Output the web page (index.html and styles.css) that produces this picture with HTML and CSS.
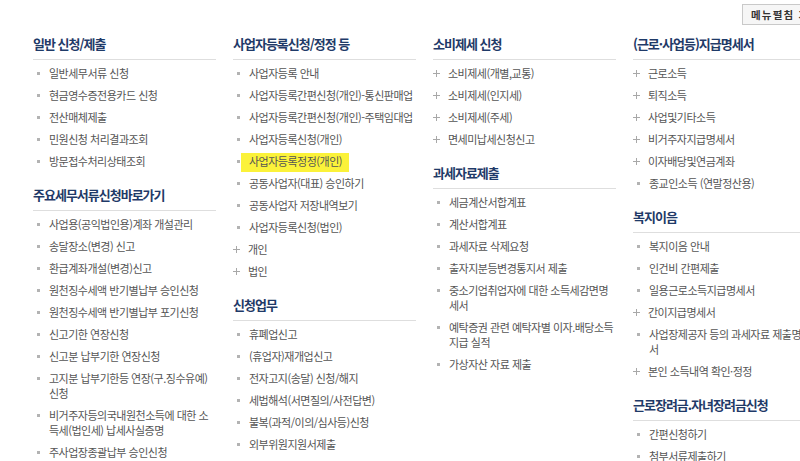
FILE: index.html
```html
<!DOCTYPE html>
<html lang="ko">
<head>
  <meta charset="UTF-8">
  <meta name="viewport" content="width=device-width, initial-scale=1.0">
  <link rel="stylesheet" href="styles.css">
</head>
<body>

<div class="topbar">
  <button class="menu-btn">메뉴펼침 가이드</button>
</div>

<div class="menu">
  <div class="col">
    <div class="group">
      <h2>일반 신청/제출</h2>
      <ul>
        <li>일반세무서류 신청</li>
        <li>현금영수증전용카드 신청</li>
        <li>전산매체제출</li>
        <li>민원신청 처리결과조회</li>
        <li>방문접수처리상태조회</li>
      </ul>
    </div>
    <div class="group">
      <h2>주요세무서류신청바로가기</h2>
      <ul>
        <li>사업용(공익법인용)계좌 개설관리</li>
        <li>송달장소(변경) 신고</li>
        <li>환급계좌개설(변경)신고</li>
        <li>원천징수세액 반기별납부 승인신청</li>
        <li>원천징수세액 반기별납부 포기신청</li>
        <li>신고기한 연장신청</li>
        <li>신고분 납부기한 연장신청</li>
        <li>고지분 납부기한등 연장(구.징수유예)신청</li>
        <li>비거주자등의국내원천소득에 대한 소득세(법인세) 납세사실증명</li>
        <li>주사업장종괄납부 승인신청</li>
      </ul>
    </div>
  </div>

  <div class="col">
    <div class="group">
      <h2>사업자등록신청/정정 등</h2>
      <ul>
        <li>사업자등록 안내</li>
        <li>사업자등록간편신청(개인)-통신판매업</li>
        <li>사업자등록간편신청(개인)-주택임대업</li>
        <li>사업자등록신청(개인)</li>
        <li><span class="mark">사업자등록정정(개인)</span></li>
        <li>공동사업자(대표) 승인하기</li>
        <li>공동사업자 저장내역보기</li>
        <li>사업자등록신청(법인)</li>
        <li class="plus">개인</li>
        <li class="plus">법인</li>
      </ul>
    </div>
    <div class="group">
      <h2>신청업무</h2>
      <ul>
        <li>휴폐업신고</li>
        <li>(휴업자)재개업신고</li>
        <li>전자고지(송달) 신청/해지</li>
        <li>세법해석(서면질의/사전답변)</li>
        <li>불복(과적/이의/심사등)신청</li>
        <li>외부위원지원서제출</li>
      </ul>
    </div>
  </div>

  <div class="col">
    <div class="group">
      <h2>소비제세 신청</h2>
      <ul>
        <li class="plus">소비제세(개별,교통)</li>
        <li class="plus">소비제세(인지세)</li>
        <li class="plus">소비제세(주세)</li>
        <li class="plus">면세미납세신청신고</li>
      </ul>
    </div>
    <div class="group">
      <h2>과세자료제출</h2>
      <ul>
        <li>세금계산서합계표</li>
        <li>계산서합계표</li>
        <li>과세자료 삭제요청</li>
        <li>출자지분등변경통지서 제출</li>
        <li>중소기업취업자에 대한 소득세감면명세서</li>
        <li>예탁증권 관련 예탁자별 이자.배당소득 지급 실적</li>
        <li>가상자산 자료 제출</li>
      </ul>
    </div>
  </div>

  <div class="col">
    <div class="group">
      <h2>(근로·사업등)지급명세서</h2>
      <ul>
        <li class="plus">근로소득</li>
        <li class="plus">퇴직소득</li>
        <li class="plus">사업및기타소득</li>
        <li class="plus">비거주자지급명세서</li>
        <li class="plus">이자배당및연금계좌</li>
        <li>종교인소득 (연말정산용)</li>
      </ul>
    </div>
    <div class="group">
      <h2>복지이음</h2>
      <ul>
        <li>복지이음 안내</li>
        <li>인건비 간편제출</li>
        <li>일용근로소득지급명세서</li>
        <li class="plus">간이지급명세서</li>
        <li>사업장제공자 등의 과세자료 제출명세서</li>
        <li class="plus">본인 소득내역 확인·정정</li>
      </ul>
    </div>
    <div class="group">
      <h2>근로장려금.자녀장려금신청</h2>
      <ul>
        <li>간편신청하기</li>
        <li>첨부서류제출하기</li>
      </ul>
    </div>
  </div>
</div>

</body>
</html>
```

FILE: styles.css
```css
html, body {
  overflow: hidden;
}

body {
  margin: 0;
  background-color: #fff;
  font-family: 'Noto Sans CJK KR', 'Noto Sans', sans-serif;
  color: #555;
}

.topbar {
  display: flex;
  justify-content: flex-end;
  height: 36px;
  padding-top: 4px;
  box-sizing: border-box;
}

.menu-btn {
  height: 21px;
  width: 92px;
  margin-right: -34px;
  padding: 0 0 0 8px;
  text-align: left;
  border: 1px solid #c9c9c9;
  background-color: #f6f6f6;
  font-family: inherit;
  font-size: 10.5px;
  font-weight: bold;
  letter-spacing: 1.2px;
  color: #333;
  white-space: nowrap;
}

.menu {
  display: flex;
  gap: 17px;
  padding-left: 33px;
  width: 900px;
}

.col {
  width: 183px;
  flex-shrink: 0;
}

.group + .group {
  margin-top: 18px;
}

h2 {
  margin: 0;
  font-size: 13px;
  line-height: 16px;
  font-weight: bold;
  letter-spacing: -1px;
  color: #1f3a68;
  padding-bottom: 7px;
  border-bottom: 1px solid #dedede;
}

ul {
  list-style: none;
  margin: 0;
  padding: 6px 2px 0 0;
}

li {
  font-size: 11px;
  line-height: 15px;
  letter-spacing: -0.5px;
  margin-bottom: 7px;
  padding-left: 16px;
  background: linear-gradient(#b3b3b3, #b3b3b3) 4px 6px / 3px 3px no-repeat;
}

li.plus {
  padding-left: 15px;
  background:
    linear-gradient(#a8a8a8, #a8a8a8) 0 7px / 7px 1px no-repeat,
    linear-gradient(#a8a8a8, #a8a8a8) 3px 4px / 1px 7px no-repeat;
}

.mark {
  background-color: #fbf23a;
  padding: 0 7px 3px 8px;
  margin-left: -8px;
}
```
